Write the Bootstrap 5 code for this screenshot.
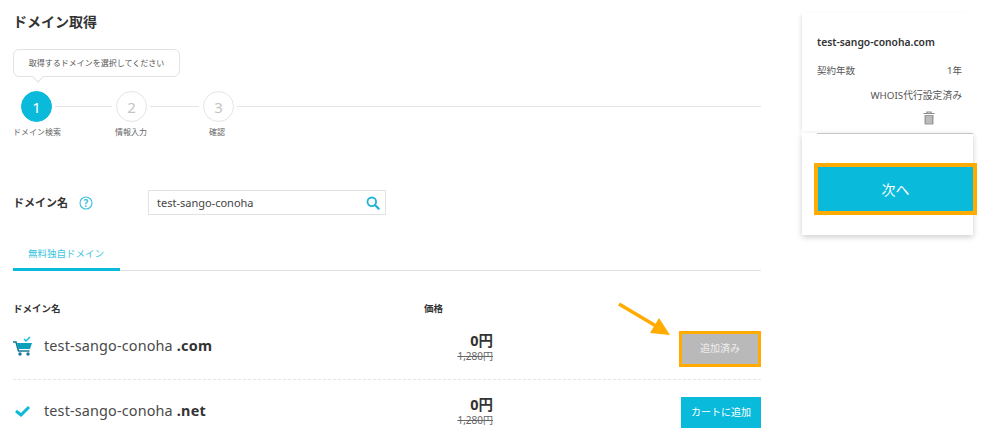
<!DOCTYPE html>
<html lang="ja">
<head>
<meta charset="utf-8">
<title>ドメイン取得</title>
<link href="https://cdn.jsdelivr.net/npm/bootstrap@5.3.0/dist/css/bootstrap.min.css" rel="stylesheet">
<style>
html,body{height:444px;overflow:hidden}
body{font-family:"Noto Sans","Noto Sans CJK JP",sans-serif;color:#333;background:#fff;padding-left:13px;font-size:10px;line-height:1.2}
.shell{gap:41px;align-items:flex-start}
.main-col{width:748px;flex:none}
.side-col{width:171px;flex:none;position:relative}
.page-title{font-size:14px;font-weight:700;margin:0;padding-top:14px;height:49px;color:#333}
.hint{width:167px;height:28px;border:1px solid #e3e3e3;border-radius:6px;font-size:8px;color:#555;position:relative;background:#fff}
.hint::after{content:"";position:absolute;left:20px;bottom:-5px;width:8px;height:8px;background:#fff;border-right:1px solid #e3e3e3;border-bottom:1px solid #e3e3e3;transform:rotate(45deg)}
.stepline{margin-top:14px;padding-left:8px;height:31px}
.dot{width:31px;height:31px;border-radius:50%;border:1px solid #e5e5e5;color:#c4c4c4;font-size:15px;flex:none;background:#fff}
.dot-on{background:#0abadb;border-color:#0abadb;color:#fff}
.conn{height:1px;background:#e5e5e5;flex:none}
.c1{width:57px;margin:0 4px 0 3px}
.c2{width:49px;margin:0 4px 0 3px}
.c3{flex:1;margin-left:3px}
.steplabels{margin-top:5px;font-size:8px;color:#666;height:10px;line-height:10px}
.lb1{width:47px}
.lb2{width:33px;margin-left:55px}
.lb3{width:16px;margin-left:61px}
.domrow{margin-top:53px;height:25px}
.domlabel{width:135px;font-size:11px;font-weight:700;color:#333;flex:none}
.helpi{margin-left:11px}
.searchbox{width:238px;height:25px;border:1px solid #e3e3e3;padding:0 5px 0 8px;font-size:11px;color:#444;flex:none}
.tabbar{margin-top:27px;height:29px;border-bottom:1px solid #e3e3e3}
.tabitem{width:107px;height:29px;border-bottom:3px solid #0abadb;margin-bottom:-1px;color:#3cc5e0;font-size:9.500px;padding-left:15px;padding-top:6px}
.thead-row{margin-top:32px;height:11px;font-size:9.500px;font-weight:700;color:#333;line-height:11px}
.cell-name{width:411px;flex:none}
.cell-price{width:69px;flex:none}
.dom-row{height:65px;border-bottom:1px dashed #e5e5e5}
.row-first{height:66px}
.ico-cell{width:31px;flex:none;margin-bottom:2px}
.dname{font-size:14.400px;color:#4a4a4a;width:380px;flex:none;letter-spacing:.15px;margin-bottom:2px}
.dname b{color:#333;font-weight:700;letter-spacing:.3px}
.pricebox{width:69px;flex:none;text-align:right}
.price-up{margin-bottom:3px}
.pnow{font-size:14.500px;font-weight:700;color:#333;height:19px;line-height:18px}
.pold{font-size:10px;color:#666;text-decoration:line-through;height:13px;line-height:13px}
.act{margin-left:auto}
.act-low{margin-top:4px}
.btn-added{width:82px;height:36px;background:#b9b9b9;border:3px solid #ffab00;color:#eee;font-size:10px;border-radius:0;padding:0}
.btn-added:hover{background:#b9b9b9;color:#eee;border-color:#ffab00}
.btn-cart{width:80px;height:31px;background:#0abadb;border:0;color:#fff;font-size:10px;border-radius:0;padding:0}
.btn-cart:hover{background:#0abadb;color:#fff}
.cartpanel{height:120px;margin-top:13px;padding:23px 11px 0 15px;box-shadow:-3px 0 4px -2px rgba(0,0,0,.12)}
.cname{font-size:10.300px;font-weight:600;color:#333}
.cterm{margin-top:17px;font-size:9.500px;color:#555}
.cwhois{margin-top:13px;font-size:9.800px;color:#555;text-align:right}
.ctrash{margin-top:10px;padding-left:106px;height:14px}
.nextcard{background:#fff;height:102px;padding:30px 0 0 12px;box-shadow:0 2px 6px rgba(0,0,0,.2);position:relative}
.nextcard::before{content:"";position:absolute;left:15px;right:0;top:0;height:1px;background:#c8c8c8}
.btn-next{width:163px;height:52px;background:#0abadb;border:4px solid #ffab00;color:#fff;font-size:14px;border-radius:0;padding:0;display:block}
.btn-next:hover{background:#0abadb;color:#fff;border-color:#ffab00}
.arrowmark{position:absolute;left:618px;top:302px}
</style>
</head>
<body>
<div class="d-flex shell">
  <div class="main-col">
    <h1 class="page-title">ドメイン取得</h1>
    <div class="hint d-flex align-items-center justify-content-center">取得するドメインを選択してください</div>
    <div class="stepline d-flex align-items-center">
      <div class="dot dot-on d-flex align-items-center justify-content-center">1</div>
      <div class="conn c1"></div>
      <div class="dot d-flex align-items-center justify-content-center">2</div>
      <div class="conn c2"></div>
      <div class="dot d-flex align-items-center justify-content-center">3</div>
      <div class="conn c3"></div>
    </div>
    <div class="steplabels d-flex">
      <div class="lb1 text-nowrap">ドメイン検索</div>
      <div class="lb2 text-nowrap">情報入力</div>
      <div class="lb3 text-nowrap">確認</div>
    </div>
    <div class="domrow d-flex align-items-center">
      <div class="domlabel d-flex align-items-center text-nowrap">ドメイン名
        <svg class="helpi" width="14" height="14" viewBox="0 0 14 14"><circle cx="7" cy="7" r="6" fill="none" stroke="#3cbfdc" stroke-width="1.100"/><text x="7" y="10.500" text-anchor="middle" font-size="10" fill="#3cbfdc" font-family="Noto Sans">?</text></svg>
      </div>
      <div class="searchbox d-flex align-items-center justify-content-between">
        <span>test-sango-conoha</span>
        <svg width="14" height="14" viewBox="0 0 14 14"><circle cx="5.800" cy="5.800" r="4.300" fill="none" stroke="#1fb4d6" stroke-width="1.800"/><path d="M9 9l3.600 3.600" stroke="#1fb4d6" stroke-width="2.200" stroke-linecap="round"/></svg>
      </div>
    </div>
    <div class="tabbar"><div class="tabitem text-nowrap">無料独自ドメイン</div></div>
    <div class="thead-row d-flex">
      <div class="cell-name">ドメイン名</div>
      <div class="cell-price">価格</div>
    </div>
    <div class="dom-row row-first d-flex align-items-center">
      <div class="ico-cell">
        <svg width="20" height="22" viewBox="0 0 20 22"><path d="M11 4l2 2 4-4" fill="none" stroke="#0abadb" stroke-width="1.400"/><path d="M0 7h3l2.500 9h11" fill="none" stroke="#157a92" stroke-width="1.600"/><path d="M4 8h15l-2 6H5.500z" fill="#0e9fbd"/><circle cx="7" cy="19" r="1.700" fill="#157a92"/><circle cx="15" cy="19" r="1.700" fill="#157a92"/></svg>
      </div>
      <div class="dname text-nowrap">test-sango-conoha <b>.com</b></div>
      <div class="pricebox"><div class="pnow">0円</div><div class="pold">1,280円</div></div>
      <div class="act act-low"><button class="btn btn-added d-block" type="button">追加済み</button></div>
    </div>
    <div class="dom-row d-flex align-items-center">
      <div class="ico-cell">
        <svg width="20" height="16" viewBox="0 0 20 16"><path d="M3 8l5 4 8-8" fill="none" stroke="#0abadb" stroke-width="3"/></svg>
      </div>
      <div class="dname text-nowrap">test-sango-conoha <b>.net</b></div>
      <div class="pricebox price-up"><div class="pnow">0円</div><div class="pold">1,280円</div></div>
      <div class="act"><button class="btn btn-cart d-block" type="button">カートに追加</button></div>
    </div>
  </div>
  <div class="side-col">
    <div class="cartpanel">
      <div class="cname">test-sango-conoha.com</div>
      <div class="cterm d-flex justify-content-between"><span>契約年数</span><span>1年</span></div>
      <div class="cwhois">WHOIS代行設定済み</div>
      <div class="ctrash"><svg class="d-block" width="12" height="14" viewBox="0 0 12 14"><path d="M4 2V1h4v1M0.500 2.500h11" fill="none" stroke="#8a8a8a" stroke-width="1.200"/><path d="M1.500 4h9v9.500h-9z" fill="#9a9a9a"/><path d="M4 5v7.500M6 5v7.500M8 5v7.500" stroke="#eee" stroke-width=".8"/></svg></div>
    </div>
    <div class="nextcard">
      <button class="btn btn-next" type="button">次へ</button>
    </div>
  </div>
</div>
<svg class="arrowmark" width="54" height="36" viewBox="0 0 54 36"><path d="M1 2L38 24" stroke="#ffab00" stroke-width="3.500" fill="none"/><path d="M52 33L32 31 41 16z" fill="#ffab00"/></svg>
</body>
</html>
